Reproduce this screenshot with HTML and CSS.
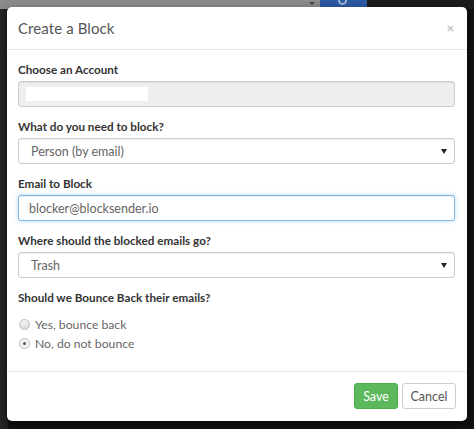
FILE: index.html
```html
<!DOCTYPE html>
<html>
<head>
<meta charset="utf-8">
<link rel="stylesheet" href="styles.css">
</head>
<body>
<div class="page">
  <div class="topbar">
    <div class="topbar-field"><span class="topbar-caret"></span></div>
    <div class="topbar-search"><span class="search-ring"></span></div>
    <div class="topbar-rest"></div>
  </div>
  <div class="page-rest"></div>
</div>

<div class="modal">
  <div class="modal-header">
    <h4 class="modal-title">Create a Block</h4>
    <span class="close">×</span>
  </div>
  <div class="modal-body">
    <div class="form-group">
      <label class="control-label">Choose an Account</label>
      <div class="form-control disabled"><span class="redacted"></span></div>
    </div>
    <div class="form-group">
      <label class="control-label">What do you need to block?</label>
      <div class="form-control select"><span>Person (by email)</span><span class="caret"></span></div>
    </div>
    <div class="form-group">
      <label class="control-label">Email to Block</label>
      <div class="form-control focus"><span>blocker@blocksender.io</span></div>
    </div>
    <div class="form-group">
      <label class="control-label">Where should the blocked emails go?</label>
      <div class="form-control select"><span>Trash</span><span class="caret"></span></div>
    </div>
    <div class="form-group last">
      <label class="control-label">Should we Bounce Back their emails?</label>
      <div class="radios">
        <div class="radio"><span class="radio-dot"></span><span>Yes, bounce back</span></div>
        <div class="radio"><span class="radio-dot checked"></span><span>No, do not bounce</span></div>
      </div>
    </div>
  </div>
  <div class="modal-footer">
    <button class="btn btn-success">Save</button>
    <button class="btn btn-default">Cancel</button>
  </div>
</div>
</body>
</html>
```

FILE: styles.css
```css
* { box-sizing: border-box; }
html, body { margin: 0; padding: 0; }
body {
  width: 474px;
  height: 429px;
  overflow: hidden;
  background: #151515;
  font-family: Lato, "Open Sans", Arial, sans-serif;
  position: relative;
}
.page { display: flex; flex-direction: column; height: 429px; }
.topbar { display: flex; height: 9px; }
.topbar-field { width: 320px; background: #8b8b8b; position: relative; }
.topbar-caret {
  position: absolute; right: 5px; top: 2px;
  width: 0; height: 0;
  border-left: 3px solid transparent;
  border-right: 3px solid transparent;
  border-top: 3px solid #444;
}
.topbar-search { width: 47px; background: #2b5aa3; position: relative; }
.search-ring { position: absolute; left: 18px; top: -4px; width: 9px; height: 9px; border: 2px solid #9fb4d8; border-radius: 50%; }
.topbar-rest { flex: 1; background: #1c1c1c; }
.page-rest { flex: 1; background: linear-gradient(90deg, #262626 0, #202020 8px, #111 8px); }

.modal {
  position: absolute;
  left: 7px;
  top: 7px;
  width: 460px;
  height: 414px;
  background: #fff;
  border-radius: 5px;
  box-shadow: 0 3px 9px rgba(0,0,0,.5);
  display: flex;
  flex-direction: column;
}
.modal-header {
  display: flex;
  align-items: center;
  justify-content: space-between;
  height: 43px;
  padding: 0 13px 0 11px;
  border-bottom: 1px solid #e5e5e5;
}
.modal-title {
  margin: 0;
  font-size: 15px;
  font-weight: 400;
  color: #555;
  letter-spacing: 0.1px;
}
.close {
  font-size: 13px;
  font-weight: 700;
  color: #c4c4c4;
  line-height: 1;
}
.modal-body {
  padding: 11px 12px 0 11px;
  flex: 1;
}
.form-group { display: flex; flex-direction: column; margin-bottom: 11px; }
.control-label {
  font-size: 11.7px;
  font-weight: 700;
  line-height: 16px;
  color: #333;
  margin-bottom: 4px;
}
.form-control {
  height: 26px;
  border: 1px solid #ccc;
  border-radius: 3px;
  display: flex;
  align-items: center;
  padding: 0 10px;
  font-size: 12.5px;
  color: #666;
  box-shadow: inset 0 1px 1px rgba(0,0,0,.075);
  background: #fff;
}
.form-control.disabled { background: #eee; padding-left: 7px; }
.redacted { width: 122px; height: 14px; background: #fff; }
.form-control.select { padding-left: 12px; justify-content: space-between; padding-right: 7px; }
.caret {
  width: 0; height: 0;
  border-left: 3px solid transparent;
  border-right: 3px solid transparent;
  border-top: 5px solid #222;
}
.form-control.focus {
  border-color: #80b8e6;
  box-shadow: inset 0 1px 1px rgba(0,0,0,.075), 0 0 4px rgba(102,175,233,.5);
}
.radios { margin-top: 7px; display: flex; flex-direction: column; gap: 3px; }
.radio { display: flex; align-items: center; height: 16px; font-size: 12.2px; color: #666; }
.radio-dot {
  width: 11px; height: 11px;
  border-radius: 50%;
  border: 1px solid #bbb;
  background: linear-gradient(#f4f4f4, #dcdcdc);
  margin: 0 5px 0 1px;
  position: relative;
}
.radio-dot.checked { background: #f5f5f5; }
.radio-dot.checked::after {
  content: "";
  position: absolute;
  left: 3px; top: 3px;
  width: 3px; height: 3px;
  border-radius: 50%;
  background: #555;
}
.modal-footer {
  border-top: 1px solid #e5e5e5;
  padding: 11px 11px 12px;
  display: flex;
  justify-content: flex-end;
  gap: 4px;
}
.btn {
  font-family: inherit;
  font-size: 12.5px;
  height: 26px;
  border-radius: 3px;
  padding: 0 12px;
  border: 1px solid;
  cursor: pointer;
}
.btn-success { background: #5cb85c; border-color: #4cae4c; color: #fff; width: 44px; padding: 0; }
.btn-default { background: #fff; border-color: #ccc; color: #555; width: 54px; padding: 0; }
```
